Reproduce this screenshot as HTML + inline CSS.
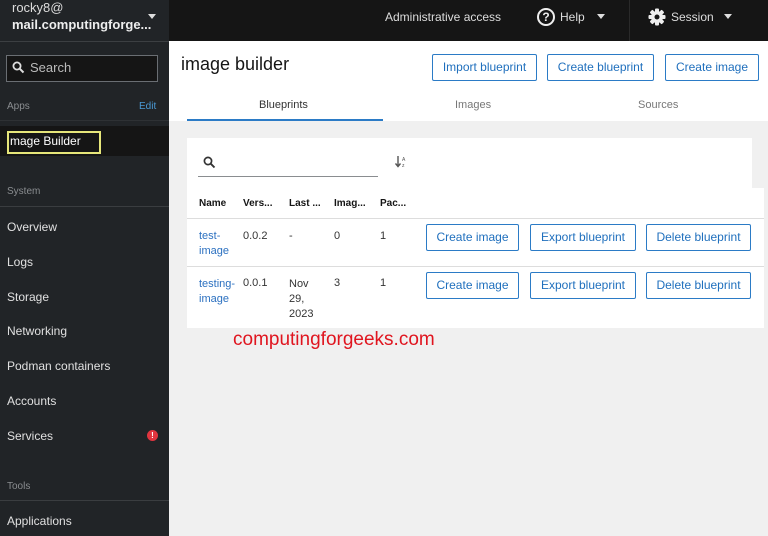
<!DOCTYPE html>
<html><head><style>
*{margin:0;padding:0;box-sizing:border-box}
body{width:768px;height:536px;overflow:hidden;font-family:"Liberation Sans",sans-serif;background:#f0f0f0;position:relative}
.a{position:absolute;white-space:nowrap}
.sb{left:0;top:0;width:169px;height:536px;background:#212427}
.nav{color:#e0e0e0;font-size:12px;left:7px}
.sec{color:#8a8d90;font-size:10px;left:7px}
.btn{position:absolute;border:1px solid #2b7bc6;border-radius:2px;background:#fff;color:#1f6fbd;font-size:12px;text-align:center;line-height:25px;height:27px}
.th{font-size:10px;font-weight:bold;color:#151515;top:198px}
.td{font-size:11px;color:#333}
.lk{font-size:11px;color:#2b70c0;line-height:15px}
</style></head><body>
<div class="a" style="left:169px;top:0;width:599px;height:41px;background:#151515"></div>
<div class="a" style="left:169px;top:41px;width:599px;height:80px;background:#fff"></div>
<div class="a sb"></div>
<div class="a" style="left:0;top:41px;width:169px;height:1px;background:#3c3f42"></div>
<div class="a" style="left:12px;top:0px;color:#ddd;font-size:13px">rocky8@</div>
<div class="a" style="left:12px;top:17px;color:#eee;font-size:13px;font-weight:bold">mail.computingforge...</div>
<div class="a" style="left:148px;top:14px;width:0;height:0;border-left:4px solid transparent;border-right:4px solid transparent;border-top:5px solid #ddd"></div>
<div class="a" style="left:6px;top:55px;width:152px;height:27px;border:1px solid #6a6e73;background:#151515"></div>
<svg class="a" style="left:12px;top:61px" width="13" height="13" viewBox="0 0 13 13"><circle cx="5" cy="5" r="3.6" stroke="#ddd" stroke-width="1.8" fill="none"/><path d="M7.6 7.6L11.5 11.5" stroke="#ddd" stroke-width="2"/></svg>
<div class="a" style="left:30px;top:60px;color:#bbb;font-size:13px">Search</div>
<div class="a sec" style="top:101px">Apps</div>
<div class="a" style="left:139px;top:101px;color:#4a9ad6;font-size:10px">Edit</div>
<div class="a" style="left:0;top:120px;width:169px;height:1px;background:#2e3134"></div>
<div class="a" style="left:0;top:126px;width:169px;height:30px;background:#151515"></div>
<div class="a" style="left:7px;top:131px;width:94px;height:23px;border:2px solid #e6e67a"></div>
<div class="a nav" style="left:10px;top:134px;color:#fff">mage Builder</div>
<div class="a sec" style="top:186px">System</div>
<div class="a" style="left:0;top:206px;width:169px;height:1px;background:#3a3d40"></div>
<div class="a nav" style="top:220px">Overview</div>
<div class="a nav" style="top:255px">Logs</div>
<div class="a nav" style="top:290px">Storage</div>
<div class="a nav" style="top:324px">Networking</div>
<div class="a nav" style="top:359px">Podman containers</div>
<div class="a nav" style="top:394px">Accounts</div>
<div class="a nav" style="top:429px">Services</div>
<div class="a" style="left:147px;top:430px;width:11px;height:11px;border-radius:50%;background:#e0353f;color:#fff;font-size:8px;text-align:center;line-height:11px;font-weight:bold">!</div>
<div class="a sec" style="top:481px">Tools</div>
<div class="a" style="left:0;top:500px;width:169px;height:1px;background:#3a3d40"></div>
<div class="a nav" style="top:514px">Applications</div>

<div class="a" style="left:385px;top:10px;color:#ddd;font-size:12px">Administrative access</div>
<div class="a" style="left:537px;top:8px;width:18px;height:18px;border:2px solid #eee;border-radius:50%;color:#eee;font-size:12px;font-weight:bold;text-align:center;line-height:14px">?</div>
<div class="a" style="left:560px;top:10px;color:#ddd;font-size:12px">Help</div>
<div class="a" style="left:597px;top:14px;border-left:4px solid transparent;border-right:4px solid transparent;border-top:5px solid #ddd"></div>
<div class="a" style="left:629px;top:0;width:1px;height:41px;background:#2a2a2a"></div>
<svg class="a" style="left:648px;top:8px" width="18" height="18" viewBox="0 0 18 18"><g fill="#eee"><circle cx="9" cy="9" r="6"/><rect x="7" y="0.5" width="4" height="17" rx="1"/><rect x="0.5" y="7" width="17" height="4" rx="1"/><rect x="7" y="0.5" width="4" height="17" rx="1" transform="rotate(45 9 9)"/><rect x="7" y="0.5" width="4" height="17" rx="1" transform="rotate(-45 9 9)"/></g><circle cx="9" cy="9" r="2.5" fill="#151515"/></svg>
<div class="a" style="left:671px;top:10px;color:#ddd;font-size:12px">Session</div>
<div class="a" style="left:724px;top:14px;border-left:4px solid transparent;border-right:4px solid transparent;border-top:5px solid #ddd"></div>

<div class="a" style="left:181px;top:54px;font-size:18px;color:#151515">image builder</div>
<div class="btn" style="left:432px;top:54px;width:105px">Import blueprint</div>
<div class="btn" style="left:547px;top:54px;width:107px">Create blueprint</div>
<div class="btn" style="left:665px;top:54px;width:94px">Create image</div>
<div class="a" style="left:259px;top:99px;font-size:11px;color:#333">Blueprints</div>
<div class="a" style="left:187px;top:119px;width:196px;height:2px;background:#2b7bc6"></div>
<div class="a" style="left:455px;top:99px;font-size:11px;color:#777">Images</div>
<div class="a" style="left:638px;top:99px;font-size:11px;color:#777">Sources</div>

<div class="a" style="left:187px;top:138px;width:565px;height:190px;background:#fff"></div>
<div class="a" style="left:752px;top:188px;width:12px;height:140px;background:#fff"></div>
<div class="a" style="left:198px;top:151px;width:180px;height:26px;border-bottom:1px solid #8a8d90"></div>
<svg class="a" style="left:203px;top:156px" width="13" height="13" viewBox="0 0 13 13"><circle cx="5" cy="5" r="3.6" stroke="#333" stroke-width="1.7" fill="none"/><path d="M7.6 7.6L11.5 11.5" stroke="#333" stroke-width="1.9"/></svg>
<svg class="a" style="left:395px;top:155px" width="12" height="13" viewBox="0 0 12 13"><path d="M3 1V11M0.5 8.5L3 11.5L5.5 8.5" stroke="#555" stroke-width="1.4" fill="none"/><text x="7" y="6" font-size="5" fill="#555" font-family="Liberation Sans">A</text><text x="7" y="12" font-size="5" fill="#555" font-family="Liberation Sans">z</text></svg>
<div class="a th" style="left:199px">Name</div>
<div class="a th" style="left:243px">Vers...</div>
<div class="a th" style="left:289px">Last ...</div>
<div class="a th" style="left:334px">Imag...</div>
<div class="a th" style="left:380px">Pac...</div>
<div class="a" style="left:187px;top:218px;width:577px;height:1px;background:#ddd"></div>
<div class="a" style="left:187px;top:266px;width:577px;height:1px;background:#ddd"></div>
<div class="a lk" style="left:199px;top:229px">test-<br>image</div>
<div class="a td" style="left:243px;top:230px">0.0.2</div>
<div class="a td" style="left:289px;top:230px">-</div>
<div class="a td" style="left:334px;top:230px">0</div>
<div class="a td" style="left:380px;top:230px">1</div>
<div class="btn" style="left:426px;top:224px;width:93px">Create image</div>
<div class="btn" style="left:530px;top:224px;width:106px">Export blueprint</div>
<div class="btn" style="left:646px;top:224px;width:105px">Delete blueprint</div>
<div class="a lk" style="left:199px;top:277px">testing-<br>image</div>
<div class="a td" style="left:243px;top:277px">0.0.1</div>
<div class="a td" style="left:289px;top:277px;line-height:15px">Nov<br>29,<br>2023</div>
<div class="a td" style="left:334px;top:277px">3</div>
<div class="a td" style="left:380px;top:277px">1</div>
<div class="btn" style="left:426px;top:272px;width:93px">Create image</div>
<div class="btn" style="left:530px;top:272px;width:106px">Export blueprint</div>
<div class="btn" style="left:646px;top:272px;width:105px">Delete blueprint</div>
<div class="a" style="left:233px;top:329px;font-size:19px;color:#e0151f">computingforgeeks.com</div>
</body></html>
